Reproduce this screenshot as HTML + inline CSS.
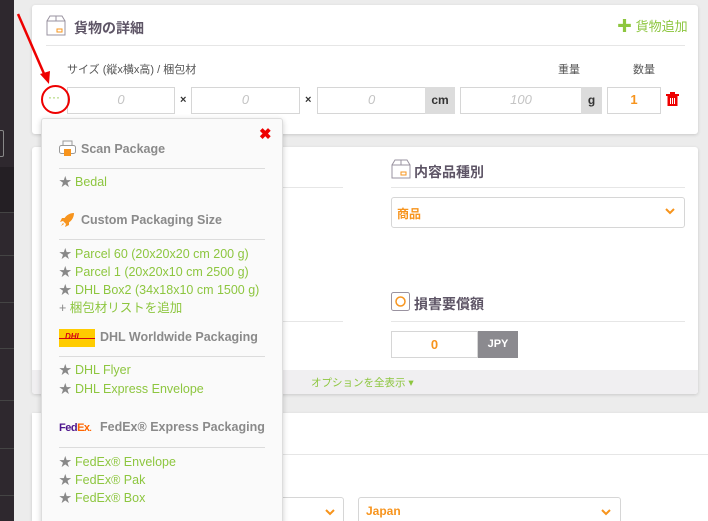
<!DOCTYPE html>
<html><head><meta charset="utf-8"><style>
*{box-sizing:border-box;margin:0;padding:0}
html,body{width:708px;height:521px;overflow:hidden}
body{background:#ececec;font-family:"Liberation Sans","Noto Sans CJK JP",sans-serif;position:relative}
.a{position:absolute}
.card{position:absolute;background:#fff;border-radius:3px;box-shadow:0 1px 3px rgba(0,0,0,.15)}
.line{position:absolute;height:1px;background:#e6e6e6}
.inp{position:absolute;border:1px solid #d6d6d6;background:#fff;text-align:center;font-size:13px;font-style:italic;color:#c4c4c4;line-height:24px}
.add{position:absolute;background:#dcdcdc;font-size:12px;font-weight:bold;color:#333;text-align:center;line-height:26px}
.h{font-size:14px;font-weight:bold;color:#5e5566}
.g{color:#8dc63f}
.it{position:absolute;left:59px;font-size:12.5px;color:#8dc63f;white-space:nowrap}
.it b{color:#888;font-weight:normal}
.ph{position:absolute;font-size:12.5px;font-weight:bold;color:#8a8a8a;white-space:nowrap}
.pl{position:absolute;left:59px;width:206px;height:1px;background:#dcdcdc}
</style></head><body>
<div class="a" style="left:0;top:0;width:14px;height:521px;background:#2e282e"></div>
<div class="a" style="left:0;top:167px;width:14px;height:46px;background:#241f24"></div>
<div class="a" style="left:-4px;top:130px;width:8px;height:27px;border:1px solid #888;border-radius:2px"></div>
<div class="a" style="left:0;top:212px;width:14px;height:1px;background:#444"></div>
<div class="a" style="left:0;top:255px;width:14px;height:1px;background:#444"></div>
<div class="a" style="left:0;top:302px;width:14px;height:1px;background:#444"></div>
<div class="a" style="left:0;top:348px;width:14px;height:1px;background:#444"></div>
<div class="a" style="left:0;top:400px;width:14px;height:1px;background:#444"></div>
<div class="a" style="left:0;top:448px;width:14px;height:1px;background:#444"></div>
<div class="a" style="left:0;top:495px;width:14px;height:1px;background:#444"></div>

<div class="card" style="left:32px;top:5px;width:666px;height:129px"></div>
<svg class="a" style="left:46px;top:15px" width="20" height="21"><path d="M1 6h18v14H1z M1 6l3-5h12l3 5 M10 1v5" fill="none" stroke="#9a93a0"/><rect x="11" y="14" width="5" height="3" fill="none" stroke="#f7941d"/></svg>
<div class="a h" style="left:74px;top:18px">貨物の詳細</div>
<div class="a g" style="left:617px;top:18px;font-size:13px;line-height:18px"><b style="font-size:15px">✚</b> 貨物追加</div>
<div class="line" style="left:46px;top:45px;width:639px"></div>
<div class="a" style="left:67px;top:61px;font-size:11px;color:#555">サイズ (縦x横x高) / 梱包材</div>
<div class="a" style="left:558px;top:61px;font-size:11px;color:#555">重量</div>
<div class="a" style="left:633px;top:61px;font-size:11px;color:#555">数量</div>
<div class="a g" style="left:48px;top:90px;font-size:12px">···</div>
<div class="inp" style="left:67px;top:87px;width:108px;height:27px">0</div>
<div class="a" style="left:180px;top:94px;font-size:11px;font-weight:bold;color:#333">×</div>
<div class="inp" style="left:191px;top:87px;width:109px;height:27px">0</div>
<div class="a" style="left:305px;top:94px;font-size:11px;font-weight:bold;color:#333">×</div>
<div class="inp" style="left:317px;top:87px;width:138px;height:27px;text-align:left;padding-left:50px">0</div>
<div class="add" style="left:425px;top:87px;width:30px;height:27px">cm</div>
<div class="inp" style="left:460px;top:87px;width:142px;height:27px;padding-right:20px">100</div>
<div class="add" style="left:581px;top:87px;width:21px;height:27px">g</div>
<div class="inp" style="left:607px;top:87px;width:54px;height:27px;font-style:normal;font-weight:bold;color:#f7941d">1</div>
<svg class="a" style="left:666px;top:92px" width="13" height="14"><rect x="0" y="2" width="13" height="2" fill="#e00"/><rect x="4" y="0" width="5" height="2" fill="#e00"/><rect x="1.5" y="4" width="10" height="10" fill="#e00"/><path d="M4.5 6v6M6.5 6v6M8.5 6v6" stroke="#fff"/></svg>

<div class="card" style="left:32px;top:147px;width:666px;height:247px;overflow:hidden"><div class="a" style="left:0;top:223px;width:666px;height:24px;background:#f0eff1"></div></div>
<div class="line" style="left:283px;top:187px;width:60px"></div>
<div class="line" style="left:283px;top:321px;width:60px"></div>
<svg class="a" style="left:391px;top:159px" width="20" height="20"><path d="M1 6h18v13H1z M1 6l3-5h12l3 5 M10 1v5" fill="none" stroke="#9a93a0"/><rect x="10" y="13" width="5" height="3" fill="none" stroke="#f7941d"/></svg>
<div class="a h" style="left:414px;top:162px">内容品種別</div>
<div class="line" style="left:391px;top:187px;width:294px"></div>
<div class="a" style="left:391px;top:197px;width:294px;height:31px;border:1px solid #d6d6d6;border-radius:3px"></div>
<div class="a" style="left:397px;top:205px;font-size:12px;font-weight:bold;color:#f7941d">商品</div>
<svg class="a" style="left:665px;top:208px" width="10" height="7"><path d="M1 1l4 4 4-4" fill="none" stroke="#f7941d" stroke-width="2"/></svg>
<svg class="a" style="left:391px;top:292px" width="19" height="19"><rect x="0.5" y="0.5" width="18" height="18" rx="2" fill="none" stroke="#9a93a0"/><circle cx="9.5" cy="9.5" r="4.5" fill="none" stroke="#f7941d" stroke-width="1.5"/></svg>
<div class="a h" style="left:414px;top:294px">損害要償額</div>
<div class="line" style="left:391px;top:321px;width:294px"></div>
<div class="a" style="left:391px;top:331px;width:87px;height:27px;border:1px solid #d6d6d6;text-align:center;line-height:25px;font-size:13px;font-weight:bold;color:#f7941d">0</div>
<div class="a" style="left:478px;top:331px;width:40px;height:27px;background:#8b8a8f;color:#fff;font-size:11px;font-weight:bold;text-align:center;line-height:27px">JPY</div>
<div class="a g" style="left:311px;top:375px;font-size:10.5px">オプションを全表示 ▾</div>

<div class="a" style="left:32px;top:413px;width:676px;height:108px;background:#fff;box-shadow:0 1px 3px rgba(0,0,0,.15)"></div>
<div class="line" style="left:283px;top:454px;width:425px"></div>
<div class="a" style="left:270px;top:497px;width:74px;height:30px;border:1px solid #d6d6d6;border-radius:3px"></div>
<svg class="a" style="left:325px;top:509px" width="10" height="7"><path d="M1 1l4 4 4-4" fill="none" stroke="#f7941d" stroke-width="2"/></svg>
<div class="a" style="left:358px;top:497px;width:263px;height:30px;border:1px solid #d6d6d6;border-radius:3px"></div>
<div class="a" style="left:366px;top:504px;font-size:12px;font-weight:bold;color:#f7941d">Japan</div>
<svg class="a" style="left:601px;top:509px" width="10" height="7"><path d="M1 1l4 4 4-4" fill="none" stroke="#f7941d" stroke-width="2"/></svg>

<div class="a" style="left:41px;top:118px;width:242px;height:410px;background:#fafafa;border:1px solid #ddd;border-radius:3px;box-shadow:0 2px 6px rgba(0,0,0,.2)"></div>
<div class="a" style="left:259px;top:125px;font-size:15px;font-weight:bold;color:#e00">✖</div>
<svg class="a" style="left:59px;top:140px" width="17" height="17"><rect x="4" y="1" width="9" height="5" fill="none" stroke="#999"/><rect x="0.5" y="5.5" width="16" height="8" rx="2" fill="#fff" stroke="#999"/><rect x="5" y="9" width="7" height="7" fill="#f7941d"/></svg>
<div class="ph" style="left:81px;top:142px">Scan Package</div>
<div class="pl" style="top:168px"></div>
<div class="it" style="top:171px"><b>★</b> Bedal</div>
<svg class="a" style="left:60px;top:212px" width="15" height="15"><path d="M14 1C9 1 5 4 3 9l3 3c5-2 8-6 8-11z" fill="#f7941d"/><path d="M3 9L0 10l2-4 3 0zM6 12l-1 3 4-2 0-3z M1 14l2-3 1 1z" fill="#f7941d"/></svg>
<div class="ph" style="left:81px;top:213px">Custom Packaging Size</div>
<div class="pl" style="top:239px"></div>
<div class="it" style="top:243px"><b>★</b> Parcel 60 (20x20x20 cm 200 g)</div>
<div class="it" style="top:261px"><b>★</b> Parcel 1 (20x20x10 cm 2500 g)</div>
<div class="it" style="top:279px"><b>★</b> DHL Box2 (34x18x10 cm 1500 g)</div>
<div class="it" style="top:297px"><b>+</b> 梱包材リストを追加</div>
<div class="a" style="left:59px;top:329px;width:36px;height:18px;background:#fc0"><div class="a" style="left:0;top:9px;width:36px;height:1px;background:#d40511"></div><div class="a" style="left:6px;top:3px;font-size:8px;font-weight:bold;font-style:italic;color:#d40511">DHL</div></div>
<div class="ph" style="left:100px;top:330px">DHL Worldwide Packaging</div>
<div class="pl" style="top:356px"></div>
<div class="it" style="top:359px"><b>★</b> DHL Flyer</div>
<div class="it" style="top:378px"><b>★</b> DHL Express Envelope</div>
<div class="a" style="left:59px;top:422px;font-size:11px;font-weight:bold;letter-spacing:-.5px"><span style="color:#4d148c">Fed</span><span style="color:#ff6600">Ex</span><span style="color:#ff6600;font-size:8px">.</span></div>
<div class="ph" style="left:100px;top:420px">FedEx® Express Packaging</div>
<div class="pl" style="top:447px"></div>
<div class="it" style="top:451px"><b>★</b> FedEx® Envelope</div>
<div class="it" style="top:469px"><b>★</b> FedEx® Pak</div>
<div class="it" style="top:487px"><b>★</b> FedEx® Box</div>

<div class="a" style="left:41px;top:85px;width:29px;height:29px;border:2.5px solid #e00;border-radius:50%"></div>
<svg class="a" style="left:0;top:0" width="80" height="90"><path d="M18 14L45 76" stroke="#e00" stroke-width="2.5"/><path d="M40 74l9 10 1-13z" fill="#e00"/></svg>
</body></html>
